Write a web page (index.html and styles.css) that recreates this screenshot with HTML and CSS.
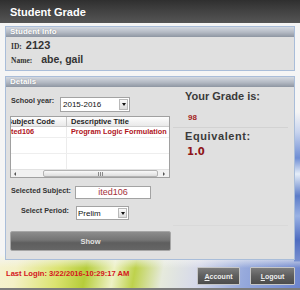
FILE: index.html
```html
<!DOCTYPE html>
<html>
<head>
<meta charset="utf-8">
<title>Student Grade</title>
<link rel="stylesheet" href="styles.css">
</head>
<body>
<div class="app">
  <header class="titlebar">Student Grade</header>

  <section class="panel info">
    <div class="panel-head">Student Info</div>
    <div class="info-body">
      <div class="info-row id-row"><span class="lbl-sm">ID:</span><span class="val">2123</span></div>
      <div class="info-row name-row"><span class="lbl-sm">Name:</span><span class="val">abe, gail</span></div>
    </div>
  </section>

  <section class="panel details">
    <div class="panel-head">Details</div>
    <div class="details-body">
      <div class="left">
        <div class="row row-year">
          <span class="lbl">School year:</span>
          <div class="select select-year"><span class="sel-text">2015-2016</span><span class="arrow"></span></div>
        </div>

        <div class="grid">
          <div class="grid-rows">
            <div class="grid-inner">
              <div class="g-row g-head"><span class="c1">Subject Code</span><span class="c2">Descriptive Title</span></div>
              <div class="g-row g-data"><span class="c1">ited106</span><span class="c2">Program Logic Formulation</span></div>
              <div class="g-row g-empty"><span class="c1"></span><span class="c2"></span></div>
              <div class="g-row g-empty"><span class="c1"></span><span class="c2"></span></div>
            </div>
          </div>
          <div class="hscroll">
            <span class="sb-left"><span class="tri-left"></span></span>
            <span class="thumb">
              <svg width="5" height="4" viewBox="0 0 5 4"><path d="M0.5 0v4M2.5 0v4M4.5 0v4" stroke="#8a8a8a" stroke-width="1"/></svg>
            </span>
            <span class="sb-right"><span class="tri-right"></span></span>
          </div>
        </div>

        <div class="row row-subject">
          <span class="lbl">Selected Subject:</span>
          <div class="textbox">ited106</div>
        </div>

        <div class="row row-period">
          <span class="lbl">Select Period:</span>
          <div class="select select-period"><span class="sel-text">Prelim</span><span class="arrow"></span></div>
        </div>

        <div class="btn-show">Show</div>
      </div>

      <div class="right">
        <div class="grade-label">Your Grade is:</div>
        <div class="grade-val">98</div>
        <div class="sep"></div>
        <div class="equiv-label">Equivalent:</div>
        <div class="equiv-val">1.0</div>
        <div class="sep sep-low"></div>
      </div>
    </div>
  </section>

  <footer class="footer">
    <span class="last-login">Last Login: 3/22/2016-10:29:17 AM</span>
    <div class="btn-dark account"><u>A</u>ccount</div>
    <div class="btn-dark logout"><u>L</u>ogout</div>
  </footer>
</div>
</body>
</html>
```

FILE: styles.css
```css
* { box-sizing: border-box; }

body {
  margin: 0;
  width: 300px;
  height: 290px;
  overflow: hidden;
  font-family: "Liberation Sans", Arial, sans-serif;
  background:
    linear-gradient(180deg, #f5f5f5 0, #f5f5f5 112px, #c8d4ee 132px, #6f8ed4 158px, #e6eef8 174px, #5c7cc8 196px, #9ab2e4 216px, #4e6cc0 240px, #7890d0 261px, rgba(0,0,0,0) 262px) right top / 6px 100% no-repeat,
    linear-gradient(180deg, #f5f5f5 0, #f5f5f5 254px, rgba(245,245,245,0) 268px) 0 0 / 100% 100% no-repeat,
    linear-gradient(100deg, #f8f5e4 0%, #f4f1c8 18%, #dbe370 30%, #b6cd3a 38%, #eef2c6 46%, #bed24c 52%, #e6eadc 60%, #d6d9ea 70%, #97aadc 83%, #6c84cc 100%);
}

.app {
  display: flex;
  flex-direction: column;
  height: 290px;
}

.titlebar {
  flex: none;
  height: 23px;
  padding: 2px 0 0 10px;
  line-height: 21px;
  font-size: 11px;
  font-weight: bold;
  color: #fff;
  background: linear-gradient(#2f2f2f, #434343 50%, #555);
}

.panel {
  flex: none;
  margin: 0 5px;
  border: 1px solid #a9bdd9;
  background: #e0e0e0;
  display: flex;
  flex-direction: column;
}
.info { margin-top: 3px; height: 45px; }
.details { margin-top: 5px; height: 184px; }

.panel-head {
  flex: none;
  height: 10px;
  padding-left: 4px;
  line-height: 10px;
  font-size: 8px;
  font-weight: bold;
  color: #fff;
  text-shadow: 0 0 1px rgba(60,60,70,.5);
  background: linear-gradient(#d4d9e1, #b2b8c2 55%, #8e96a2);
}

/* student info */
.info-body { padding: 1px 0 0 5px; }
.info-row {
  height: 14px;
  line-height: 14px;
  display: flex;
  align-items: baseline;
  color: #333;
}
.lbl-sm {
  font-family: "Liberation Serif", "Times New Roman", serif;
  font-weight: bold;
  font-size: 7.5px;
}
.val { font-weight: bold; font-size: 11px; }
.id-row .lbl-sm { margin-right: 4px; }
.name-row .lbl-sm { margin-right: 9px; }
.name-row .val { font-size: 10.5px; }

/* details */
.details-body {
  flex: 1;
  display: flex;
  padding: 0 6px 0 4px;
}
.left {
  width: 161px;
  flex: none;
  display: flex;
  flex-direction: column;
}
.right {
  flex: 1;
  margin-left: 2px;
  display: flex;
  flex-direction: column;
}

.row { display: flex; align-items: flex-start; }
.lbl {
  flex: none;
  padding-left: 1px;
  font-weight: bold;
  font-size: 7.2px;
  line-height: 8px;
  color: #333;
}
.row-year { margin-top: 10px; }
.row-year .lbl { width: 50px; }
.row-subject { margin-top: 8px; }
.row-subject .lbl { width: 65px; line-height: 10px; }
.row-period { margin-top: 7px; }
.row-period .lbl { width: 66px; padding-left: 11px; line-height: 10px; }

.select {
  display: flex;
  align-items: center;
  background: #fff;
  border: 1px solid #a3a3a3;
  font-size: 8px;
  color: #111;
}
.select-year { width: 70px; height: 15px; padding-left: 2px; }
.select-period { width: 53px; height: 14px; padding-left: 1px; }
.arrow {
  margin-left: auto;
  margin-right: 1px;
  width: 9px;
  height: 11px;
  border: 1px solid #b9b9b9;
  background: linear-gradient(#fbfbfb, #dcdcdc);
  display: flex;
  align-items: center;
  justify-content: center;
}
.select-period .arrow { height: 10px; }
.arrow::after {
  content: "";
  border-left: 2.5px solid transparent;
  border-right: 2.5px solid transparent;
  border-top: 3px solid #111;
}

/* grid */
.grid {
  margin-top: 4px;
  width: 160px;
  height: 62px;
  border: 1px solid #a0a0a0;
  background: #fff;
  display: flex;
  flex-direction: column;
  overflow: hidden;
}
.grid-rows { flex: 1; overflow: hidden; }
.grid-inner { margin-left: -5px; width: 170px; }
.g-row {
  display: grid;
  grid-template-columns: 61px 1fr;
  white-space: nowrap;
}
.g-row span { overflow: hidden; }
.g-head {
  height: 10px;
  line-height: 10px;
  font-size: 7.5px;
  font-weight: bold;
  color: #1c1c1c;
  background: linear-gradient(#fdfdfd, #e9e9e9);
  border-bottom: 1px solid #cdcdcd;
}
.g-head .c1 { padding-left: 1px; border-right: 1px solid #c6c6c6; }
.g-head .c2 { padding-left: 4px; }
.g-data {
  height: 10px;
  line-height: 10px;
  font-size: 7.3px;
  font-weight: bold;
  color: #b0141c;
}
.g-data .c1 { padding-left: 3px; border-right: 1px solid #ececec; }
.g-data .c2 { padding-left: 4px; }
.g-empty { height: 16px; border-top: 1px solid #eeeeee; }
.g-empty .c1 { border-right: 1px solid #ececec; }

.hscroll {
  flex: none;
  height: 8px;
  display: flex;
  align-items: center;
  background: #f1f1f1;
  border-top: 1px solid #e2e2e2;
}
.sb-left { width: 32px; padding-left: 3px; display: flex; align-items: center; }
.sb-right { flex: 1; display: flex; align-items: center; justify-content: center; }
.tri-left {
  border-top: 2px solid transparent;
  border-bottom: 2px solid transparent;
  border-right: 2px solid #555;
}
.tri-right {
  border-top: 2px solid transparent;
  border-bottom: 2px solid transparent;
  border-left: 2px solid #555;
}
.thumb {
  width: 115px;
  height: 7px;
  border: 1px solid #b3b3b3;
  border-radius: 2px;
  background: linear-gradient(#f9f9f9, #dedede);
  display: flex;
  align-items: center;
  justify-content: center;
}
.thumb svg { display: block; }

.textbox {
  width: 76px;
  height: 13px;
  background: #fff;
  border: 1px solid #a3a3a3;
  text-align: center;
  font-size: 9px;
  line-height: 11px;
  color: #a5323a;
}

.btn-show {
  margin-top: 11px;
  height: 20px;
  width: 161px;
  border: 1px solid #a6a6a6;
  border-radius: 2px;
  background: linear-gradient(#8c8c8c, #747474 45%, #5e5e5e 60%, #666);
  color: #e2e2e2;
  font-weight: bold;
  font-size: 7.5px;
  display: flex;
  align-items: center;
  justify-content: center;
}

/* grade */
.grade-label {
  margin-top: 3px;
  padding-left: 12px;
  font-weight: bold;
  font-size: 11px;
  line-height: 13px;
  color: #3a3a3a;
}
.grade-val {
  margin-top: 10px;
  padding-left: 15px;
  font-weight: bold;
  font-size: 8px;
  line-height: 10px;
  color: #a41e22;
}
.sep { margin-top: 4px; height: 1px; background: #d2d2d2; }
.equiv-label {
  margin-top: 2px;
  padding-left: 12px;
  font-weight: bold;
  font-size: 11px;
  letter-spacing: 0.6px;
  line-height: 13px;
  color: #3a3a3a;
}
.equiv-val {
  margin-top: 2px;
  padding-left: 14px;
  font-family: "DejaVu Sans", Verdana, sans-serif;
  font-weight: bold;
  font-size: 10px;
  line-height: 13px;
  color: #8e1418;
}
.sep-low { margin-top: auto; margin-bottom: 33px; background: #d9d9d9; }

/* footer */
.footer {
  flex: 1;
  display: flex;
  align-items: flex-start;
  padding: 0 5px 0 6px;
  border-bottom: 2px solid #7c7c7c;
}
.last-login {
  margin-top: 9px;
  font-weight: bold;
  font-size: 7.6px;
  line-height: 10px;
  color: #d4141c;
}
.btn-dark {
  margin-top: 7px;
  height: 18px;
  border: 1px solid #c6c6c6;
  border-radius: 1px;
  background: linear-gradient(#7c7c7c, #5e5e5e 50%, #4c4c4c);
  color: #eee;
  font-weight: bold;
  font-size: 7px;
  display: flex;
  align-items: center;
  justify-content: center;
}
.account { margin-left: auto; width: 43px; }
.logout { margin-left: 10px; width: 45px; }
```
